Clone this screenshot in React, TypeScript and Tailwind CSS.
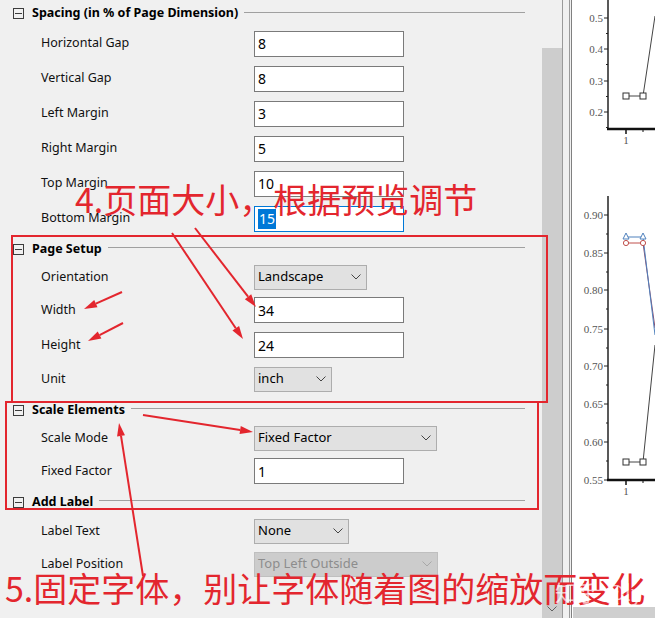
import React from 'react';

type Row =
  | { kind: 'header'; title: string; h: string }
  | { kind: 'input'; label: string; value: string; h: string; selected?: boolean }
  | { kind: 'select'; label: string; value: string; h: string; w: string; disabled?: boolean };

const rows: Row[] = [
  { kind: 'header', title: 'Spacing (in % of Page Dimension)', h: 'h-[25px]' },
  { kind: 'input', label: 'Horizontal Gap', value: '8', h: 'h-[35px]' },
  { kind: 'input', label: 'Vertical Gap', value: '8', h: 'h-[35px]' },
  { kind: 'input', label: 'Left Margin', value: '3', h: 'h-[35px]' },
  { kind: 'input', label: 'Right Margin', value: '5', h: 'h-[35px]' },
  { kind: 'input', label: 'Top Margin', value: '10', h: 'h-[35px]' },
  { kind: 'input', label: 'Bottom Margin', value: '15', h: 'h-[35px]', selected: true },
  { kind: 'header', title: 'Page Setup', h: 'h-[26px]' },
  { kind: 'select', label: 'Orientation', value: 'Landscape', h: 'h-[30px]', w: 'w-[113px]' },
  { kind: 'input', label: 'Width', value: '34', h: 'h-[36px]' },
  { kind: 'input', label: 'Height', value: '24', h: 'h-[34px]' },
  { kind: 'select', label: 'Unit', value: 'inch', h: 'h-[34px]', w: 'w-[78px]' },
  { kind: 'header', title: 'Scale Elements', h: 'h-[28px]' },
  { kind: 'select', label: 'Scale Mode', value: 'Fixed Factor', h: 'h-[28px]', w: 'w-[183px]' },
  { kind: 'input', label: 'Fixed Factor', value: '1', h: 'h-[38px]' },
  { kind: 'header', title: 'Add Label', h: 'h-[24px]' },
  { kind: 'select', label: 'Label Text', value: 'None', h: 'h-[34px]', w: 'w-[95px]' },
  { kind: 'select', label: 'Label Position', value: 'Top Left Outside', h: 'h-[32px]', w: 'w-[184px]', disabled: true },
];

function Chevron({ color }: { color: string }) {
  return (
    <svg width="10" height="6" viewBox="0 0 10 6">
      <path d="M0.5 0.5 L5 5 L9.5 0.5" fill="none" stroke={color} strokeWidth="1" />
    </svg>
  );
}

function SectionHeader({ title, h }: { title: string; h: string }) {
  return (
    <div className={`flex items-center ${h}`}>
      <span className="ml-[13px] w-[11px] h-[11px] border border-[#3c3c3c] flex items-center justify-center">
        <span className="w-[7px] h-px bg-[#3c3c3c]" />
      </span>
      <span className="ml-[8px] font-bold text-[12.5px] text-black leading-none">{title}</span>
      <span className="ml-[6px] mr-[17px] -mt-[3px] flex-1 h-px bg-[#a0a0a0]" />
    </div>
  );
}

function Arrow({ x1, y1, x2, y2 }: { x1: number; y1: number; x2: number; y2: number }) {
  const dx = x2 - x1;
  const dy = y2 - y1;
  const len = Math.sqrt(dx * dx + dy * dy);
  const ux = dx / len;
  const uy = dy / len;
  const hl = 13;
  const hw = 4;
  const bx = x2 - ux * hl;
  const by = y2 - uy * hl;
  const pts = `${x2},${y2} ${bx - uy * hw},${by + ux * hw} ${bx + uy * hw},${by - ux * hw}`;
  return (
    <g>
      <line x1={x1} y1={y1} x2={bx} y2={by} stroke="#e3262e" strokeWidth="2" />
      <polygon points={pts} fill="#e3262e" />
    </g>
  );
}

function Chart() {
  const top = [
    { y: 18, t: '0.5' },
    { y: 49, t: '0.4' },
    { y: 81, t: '0.3' },
    { y: 112, t: '0.2' },
  ];
  const bottom = [
    { y: 215, t: '0.90' },
    { y: 253, t: '0.85' },
    { y: 290, t: '0.80' },
    { y: 329, t: '0.75' },
    { y: 366, t: '0.70' },
    { y: 404, t: '0.65' },
    { y: 442, t: '0.60' },
    { y: 480, t: '0.55' },
  ];
  const font = { fontFamily: '"Liberation Serif", serif', fontSize: 11 };
  return (
    <svg width="83" height="607" viewBox="0 0 83 607" className="block">
      {/* top plot */}
      <line x1="36" y1="0" x2="36" y2="130" stroke="#222" strokeWidth="1.5" />
      {top.map((m) => (
        <g key={m.t}>
          <line x1="32" y1={m.y} x2="36" y2={m.y} stroke="#222" />
          <line x1="34" y1={m.y + 15.5} x2="36" y2={m.y + 15.5} stroke="#222" />
          <text x="31" y={m.y + 4} textAnchor="end" fill="#555" style={font}>{m.t}</text>
        </g>
      ))}
      <line x1="35" y1="129" x2="83" y2="129" stroke="#111" strokeWidth="2.5" />
      <line x1="54" y1="129" x2="54" y2="134" stroke="#111" strokeWidth="1.5" />
      <line x1="71" y1="129" x2="71" y2="132" stroke="#111" />
      <text x="54" y="144" textAnchor="middle" fill="#555" style={font}>1</text>
      <line x1="54" y1="96" x2="71" y2="96" stroke="#444" />
      <line x1="71" y1="96" x2="83" y2="16" stroke="#444" />
      <rect x="51" y="93" width="6" height="6" fill="white" stroke="#333" />
      <rect x="68" y="93" width="6" height="6" fill="white" stroke="#333" />

      {/* bottom plot */}
      <line x1="36" y1="196" x2="36" y2="481" stroke="#222" strokeWidth="1.5" />
      {bottom.map((m) => (
        <g key={m.t}>
          <line x1="32" y1={m.y} x2="36" y2={m.y} stroke="#222" />
          {m.y < 470 && <line x1="34" y1={m.y + 19} x2="36" y2={m.y + 19} stroke="#222" />}
          <text x="31" y={m.y + 4} textAnchor="end" fill="#555" style={font}>{m.t}</text>
        </g>
      ))}
      <line x1="35" y1="480" x2="83" y2="480" stroke="#111" strokeWidth="2.5" />
      <line x1="54" y1="480" x2="54" y2="485" stroke="#111" strokeWidth="1.5" />
      <line x1="71" y1="480" x2="71" y2="483" stroke="#111" />
      <text x="54" y="495" textAnchor="middle" fill="#555" style={font}>1</text>
      <line x1="54" y1="462" x2="71" y2="462" stroke="#444" />
      <line x1="71" y1="462" x2="83" y2="345" stroke="#444" />
      <rect x="51" y="459" width="6" height="6" fill="white" stroke="#333" />
      <rect x="68" y="459" width="6" height="6" fill="white" stroke="#333" />
      <line x1="54" y1="243" x2="71" y2="243" stroke="#c0504d" />
      <line x1="71" y1="243" x2="83" y2="328" stroke="#8a4a6a" />
      <line x1="54" y1="237" x2="71" y2="237" stroke="#4f81bd" />
      <line x1="71" y1="237" x2="83" y2="335" stroke="#4f81bd" />
      <path d="M54 233 L57 239 L51 239 Z" fill="white" stroke="#4f81bd" />
      <path d="M71 233 L74 239 L68 239 Z" fill="white" stroke="#4f81bd" />
      <circle cx="54" cy="243" r="2.6" fill="white" stroke="#c0504d" />
      <circle cx="71" cy="243" r="2.6" fill="white" stroke="#c0504d" />
    </svg>
  );
}

export default function App() {
  return (
    <div
      className="relative w-[655px] h-[618px] overflow-hidden bg-[#f0f0f0] flex"
      style={{ fontFamily: '"Noto Sans", "Open Sans", sans-serif' }}
    >
      {/* Property grid */}
      <div className="w-[542px] shrink-0 pt-px">
        {rows.map((row, i) => {
          if (row.kind === 'header') return <SectionHeader key={i} title={row.title} h={row.h} />;
          return (
            <div key={i} className={`flex items-center ${row.h}`}>
              <span className="w-[254px] pl-[41px] text-[12.5px] text-[#111]">{row.label}</span>
              {row.kind === 'input' ? (
                <div
                  className={`w-[150px] h-[26px] bg-white border flex items-center pl-[3px] text-[14px] text-black ${
                    row.selected ? 'border-[#0078d7]' : 'border-[#7a7a7a]'
                  }`}
                >
                  {row.selected ? (
                    <span className="bg-[#0078d7] text-white leading-[20px] px-px">{row.value}</span>
                  ) : (
                    row.value
                  )}
                </div>
              ) : (
                <div
                  className={`${row.w} h-[25px] border flex items-center justify-between pl-[3px] pr-[5px] text-[13px] ${
                    row.disabled
                      ? 'bg-[#cccccc] border-[#bfbfbf] text-[#8d8d8d]'
                      : 'bg-[#e1e1e1] border-[#adadad] text-black'
                  }`}
                >
                  <span>{row.value}</span>
                  <Chevron color={row.disabled ? '#a8a8a8' : '#444'} />
                </div>
              )}
            </div>
          );
        })}
      </div>

      {/* Vertical scrollbar */}
      <div className="w-[20px] shrink-0 flex flex-col">
        <div className="h-[48px] bg-[#f0f0f0]" />
        <div className="flex-1 bg-[#cdcdcd]" />
        <div className="h-[18px] bg-[#cdcdcd] flex items-center justify-center">
          <Chevron color="#606060" />
        </div>
      </div>

      {/* Splitter */}
      <div className="w-[10px] shrink-0 flex">
        <div className="w-px bg-[#9a9a9a]" />
        <div className="w-[6px] bg-[#f0f0f0]" />
        <div className="w-px bg-[#9a9a9a]" />
        <div className="w-px bg-[#f0f0f0]" />
        <div className="w-px bg-[#808080]" />
      </div>

      {/* Graph preview */}
      <div className="flex-1 bg-white flex flex-col">
        <Chart />
        <div className="h-[11px] ml-px bg-[#cfcfcf]" />
      </div>

      {/* Annotations */}
      <div className="absolute inset-0 pointer-events-none">
        <div className="absolute left-[11px] top-[235px] w-[537px] h-[168px] border-2 border-[#e3262e]" />
        <div className="absolute left-[5px] top-[401px] w-[534px] h-[109px] border-2 border-[#e3262e]" />
        <svg width="655" height="618" className="absolute left-0 top-0">
          <Arrow x1={172} y1={233} x2={243} y2={339} />
          <Arrow x1={195} y1={228} x2={256} y2={307} />
          <Arrow x1={122} y1={292} x2={84} y2={309} />
          <Arrow x1={123} y1={323} x2={88} y2={341} />
          <Arrow x1={143} y1={415} x2={253} y2={432} />
          <Arrow x1={143} y1={576} x2={119} y2={423} />
        </svg>
        <div
          className="absolute left-[75px] top-[182px] text-[34px] leading-none text-[#e3262e] whitespace-nowrap"
          style={{ fontFamily: '"Noto Sans CJK SC", sans-serif' }}
        >
          4.页面大小，根据预览调节
        </div>
        <div
          className="absolute left-[5px] top-[571px] text-[34px] leading-none text-[#e3262e] whitespace-nowrap"
          style={{ fontFamily: '"Noto Sans CJK SC", sans-serif' }}
        >
          5.固定字体，别让字体随着图的缩放而变化
        </div>
        <div
          className="absolute left-[555px] top-[580px] text-[22px] leading-none text-white/70 whitespace-nowrap"
          style={{ fontFamily: '"Noto Sans CJK SC", sans-serif' }}
        >
          知乎 @ly
        </div>
      </div>
    </div>
  );
}
